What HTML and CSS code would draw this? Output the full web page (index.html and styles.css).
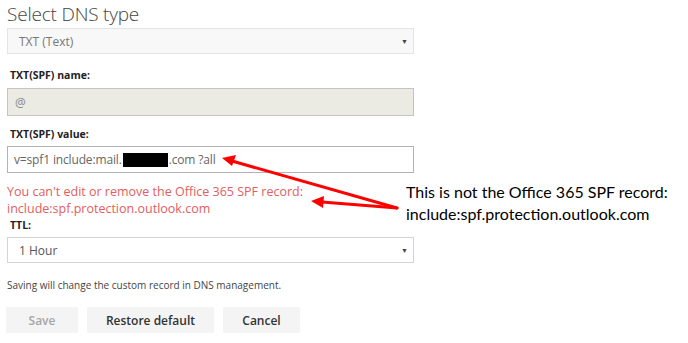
FILE: index.html
```html
<!DOCTYPE html>
<html lang="en">
<head>
  <meta charset="UTF-8">
  <title>Edit DNS record</title>
  <link rel="stylesheet" href="styles.css">
</head>
<body>
  <div class="page">
    <div class="form">
      <h1>Select DNS type</h1>
      <div class="select disabled">
        <span>TXT (Text)</span>
        <span class="caret">&#9660;</span>
      </div>

      <label class="field-label first">TXT(SPF) name:</label>
      <div class="input readonly">@</div>

      <label class="field-label">TXT(SPF) value:</label>
      <div class="input">v=spf1 include:mail.<span class="redact"></span>.com ?all</div>

      <p class="error">You can't edit or remove the Office 365 SPF record:<br>include:spf.protection.outlook.com</p>

      <label class="field-label ttl">TTL:</label>
      <div class="select">
        <span>1 Hour</span>
        <span class="caret">&#9660;</span>
      </div>

      <p class="note">Saving will change the custom record in DNS management.</p>

      <div class="actions">
        <button class="btn save" disabled>Save</button>
        <button class="btn restore">Restore default</button>
        <button class="btn cancel">Cancel</button>
      </div>
    </div>

    <div class="callout">This is not the Office 365 SPF record:<br>include:spf.protection.outlook.com</div>

    <svg class="arrows" width="688" height="343" viewBox="0 0 688 343">
      <g stroke="#f00" stroke-width="3" fill="none" stroke-linecap="round">
        <line x1="397" y1="208" x2="232" y2="161"/>
        <line x1="397" y1="208" x2="322" y2="202"/>
      </g>
      <g fill="#f00">
        <polygon points="222,158 236,155 232,166"/>
        <polygon points="311,201 324,196 323,208"/>
      </g>
    </svg>
  </div>
</body>
</html>
```

FILE: styles.css
```css
* { box-sizing: border-box; margin: 0; padding: 0; }
body {
  font-family: 'Open Sans', 'Noto Sans', sans-serif;
  background: #fff;
  color: #333;
  width: 688px;
  height: 343px;
  overflow: hidden;
}
.page {
  position: relative;
  width: 688px;
  height: 343px;
  padding: 2px 7px 0 7px;
}
.form {
  width: 407px;
  display: flex;
  flex-direction: column;
}
h1 {
  font-size: 19px;
  font-weight: 300;
  color: #444;
  line-height: 24px;
  height: 26px;
  letter-spacing: -0.2px;
}
.select {
  display: flex;
  justify-content: space-between;
  align-items: center;
  height: 26px;
  padding: 0 5px 0 11px;
  border: 1px solid #d4d4d4;
  background: #fff;
  font-size: 12px;
  color: #555;
}
.select.disabled {
  background: #f8f8f8;
  border-color: #e2e5e8;
  color: #777;
}
.caret {
  font-size: 7px;
  color: #444;
}
.field-label {
  display: block;
  font-size: 10.5px;
  font-weight: 700;
  color: #222;
  line-height: 14px;
  margin: 11px 0 5px 3px;
}
.field-label.first { margin: 14px 0 6px 3px; }
.field-label.ttl { margin: 1px 0 5px 3px; }
.input {
  display: flex;
  align-items: center;
  height: 27px;
  padding: 0 6px;
  border: 1px solid #b3b3b3;
  font-size: 12px;
  letter-spacing: -0.15px;
  color: #666;
  white-space: nowrap;
}
.input.readonly {
  height: 28px;
  background: #ebebe4;
  border-color: #c4c4c0;
  color: #888;
  padding-left: 7px;
}
.redact {
  display: inline-block;
  width: 45px;
  height: 14px;
  background: #000;
  margin: 0 1px;
}
.error {
  color: #e35d60;
  font-size: 12.5px;
  line-height: 17px;
  margin-top: 10px;
}
.note {
  font-size: 10px;
  color: #444;
  margin: 15px 0 0 0;
  line-height: 14px;
}
.actions {
  display: flex;
  gap: 9px;
  margin-top: 15px;
  margin-left: -1px;
}
.btn {
  height: 26px;
  border: none;
  background: #f4f4f4;
  font-family: inherit;
  font-size: 12px;
  font-weight: 600;
  color: #333;
}
.btn.save { width: 72px; color: #a6a6a6; }
.btn.restore { width: 127px; }
.btn.cancel { width: 77px; }
.callout {
  position: absolute;
  left: 406px;
  top: 181px;
  font-family: 'Lato', 'Liberation Sans', sans-serif;
  font-size: 16px;
  line-height: 22px;
  color: #000;
  white-space: nowrap;
}
.arrows {
  position: absolute;
  left: 0;
  top: 0;
}
```
